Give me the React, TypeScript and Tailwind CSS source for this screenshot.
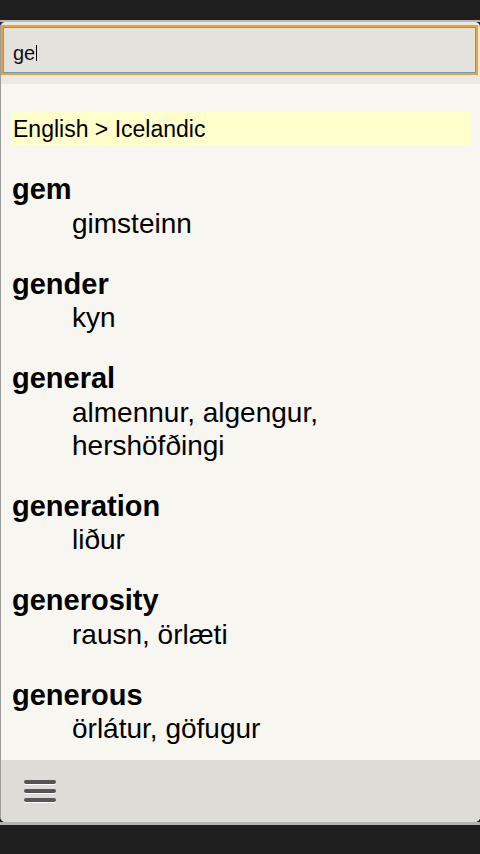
const entries: { word: string; lines: string[] }[] = [
  { word: "gem", lines: ["gimsteinn"] },
  { word: "gender", lines: ["kyn"] },
  { word: "general", lines: ["almennur, algengur,", "hershöfðingi"] },
  { word: "generation", lines: ["liður"] },
  { word: "generosity", lines: ["rausn, örlæti"] },
  { word: "generous", lines: ["örlátur, göfugur"] },
];

function MenuIcon() {
  return (
    <div className="flex flex-col gap-[5px] w-[32px]">
      <div className="h-[4px] rounded-full bg-[#555555] shadow-[0_1px_0_#ffffff]" />
      <div className="h-[4px] rounded-full bg-[#555555] shadow-[0_1px_0_#ffffff]" />
      <div className="h-[4px] rounded-full bg-[#555555] shadow-[0_1px_0_#ffffff]" />
    </div>
  );
}

export default function App() {
  return (
    <div className="w-[480px] h-[854px] bg-[#1e1e1e] flex flex-col font-['Liberation_Sans',Arial,sans-serif] text-black overflow-hidden">
      {/* status area */}
      <div className="h-[20px] shrink-0" />
      <div className="h-[2px] shrink-0 bg-[#b9b9b9]" />

      <div className="flex-1 flex flex-col min-h-0 rounded-[5px] overflow-hidden border-l border-[#9c9c9c] bg-[#ebe9e3]">
        {/* search */}
        <div className="h-[62px] shrink-0 pt-[3px] pr-[2px]">
          <div className="h-[50px] border-2 border-[#e9a23a] shadow-[inset_0_0_0_1px_#5f9fcf] bg-[#e4e2dc] flex items-center pl-[10px] pt-[5px]">
            <span className="text-[20px] leading-none text-[#111]">ge</span>
            <span className="inline-block w-px h-[16px] bg-black ml-px" />
          </div>
        </div>

        {/* results */}
        <div className="flex-1 min-h-0 bg-[#f8f6f0] pl-[10px] pr-[9px] pt-[28px] overflow-hidden">
          <div className="h-[33px] bg-[#ffffcc] pl-[2px] text-[23px] leading-[34px]">
            English &gt; Icelandic
          </div>
          <div className="flex flex-col gap-[28px] mt-[28px] pl-[1px]">
            {entries.map((e) => (
              <div key={e.word}>
                <div className="text-[29px] font-bold leading-[33.5px]">{e.word}</div>
                {e.lines.map((l) => (
                  <div key={l} className="pl-[60px] text-[28px] leading-[33px]">
                    {l}
                  </div>
                ))}
              </div>
            ))}
          </div>
        </div>

        {/* bottom bar */}
        <div className="h-[62px] shrink-0 bg-[#dedcd6] flex items-center pl-[23px]">
          <MenuIcon />
        </div>
      </div>

      <div className="h-[3px] shrink-0 bg-[#b3b3b3]" />
      <div className="h-[29px] shrink-0" />
    </div>
  );
}
